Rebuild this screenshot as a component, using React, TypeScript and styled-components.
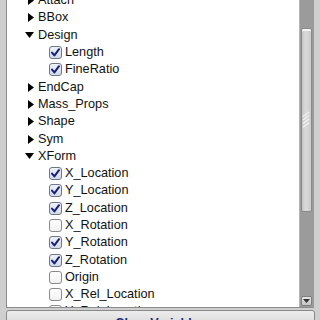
import * as React from 'react'
import styled, { createGlobalStyle } from 'styled-components'

const Global = createGlobalStyle`
  html, body { margin: 0; padding: 0; background: #d2d2d2; }
  body { font-family: "Liberation Sans", Arial, sans-serif; }
`

const Frame = styled.div`
  width: 320px;
  height: 320px;
  overflow: hidden;
  background: #cfcfcf;
  display: flex;
  flex-direction: column;
`

const ListBox = styled.div`
  height: 308px;
  margin-left: 6px;
  margin-right: 6px;
  flex: none;
  display: flex;
  background: #fff;
  border-left: 1px solid #8c8c8c;
  border-right: 1px solid #9a9a9a;
  border-bottom: 1px solid #8c8c8c;
  box-sizing: border-box;
`

const Content = styled.div`
  flex: 1;
  overflow: hidden;
`

const Rows = styled.div`
  margin-top: -8px;
`

const Row = styled.div<{ $level: number }>`
  height: 17.3px;
  display: flex;
  align-items: center;
  padding-left: ${p => (p.$level === 0 ? 18 : 42)}px;
  font-size: 12.7px;
  color: #111;
  white-space: nowrap;
`

const Arrow = styled.span<{ $open: boolean }>`
  width: 12px;
  height: 10px;
  display: flex;
  align-items: center;
  justify-content: ${p => (p.$open ? 'flex-start' : 'center')};
  margin-right: 1px;
`

const Label = styled.span`
  line-height: 17px;
`

const Box = styled.span<{ $checked: boolean }>`
  width: 11px;
  height: 11px;
  border: 1px solid ${p => (p.$checked ? '#6f7785' : '#8a8a8a')};
  border-radius: 3px;
  background: ${p => (p.$checked ? 'linear-gradient(#eef2f8, #d3dbe7)' : 'linear-gradient(#ffffff, #f1f1f1)')};
  margin-right: 3px;
  display: flex;
  align-items: center;
  justify-content: center;
  flex: none;
`

const ScrollBar = styled.div`
  width: 14px;
  flex: none;
  display: flex;
  flex-direction: column;
  background: #9b9b9b;
  border-left: 1px solid #b4b4b4;
  box-sizing: border-box;
`

const Track = styled.div<{ $h: number }>`
  height: ${p => p.$h}px;
  flex: none;
`

const Thumb = styled.div`
  height: 182px;
  flex: none;
  margin: 0 1px;
  border: 1px solid #8a8a8a;
  border-radius: 2px;
  background: linear-gradient(90deg, #c4c4c4, #dadada 40%, #cbcbcb);
  box-shadow: inset 0 2px 0 #f4f4f4;
  display: flex;
  align-items: center;
  justify-content: center;
`

const StepButton = styled.div`
  height: 12px;
  margin: 0 1px 1px;
  border: 1px solid #7f7f7f;
  border-radius: 2px;
  background: linear-gradient(#e4e4e4, #c6c6c6);
  display: flex;
  align-items: center;
  justify-content: center;
`

const Footer = styled.div`
  flex: 1;
  padding: 2px 5px 0 6px;
`

const ClearButton = styled.button`
  width: 100%;
  height: 24px;
  border: 1px solid #8a8a8a;
  border-radius: 3px;
  background: linear-gradient(#ececec, #d0d0d0);
  font-family: "Liberation Sans", Arial, sans-serif;
  font-weight: bold;
  font-size: 12.6px;
  color: #1b2a78;
  padding: 5px 0 0;
  display: flex;
  justify-content: center;
  align-items: flex-start;
`

type Item = { label: string; level: number; open?: boolean; checked?: boolean }

const items: Item[] = [
  { label: 'Attach', level: 0, open: false },
  { label: 'BBox', level: 0, open: false },
  { label: 'Design', level: 0, open: true },
  { label: 'Length', level: 1, checked: true },
  { label: 'FineRatio', level: 1, checked: true },
  { label: 'EndCap', level: 0, open: false },
  { label: 'Mass_Props', level: 0, open: false },
  { label: 'Shape', level: 0, open: false },
  { label: 'Sym', level: 0, open: false },
  { label: 'XForm', level: 0, open: true },
  { label: 'X_Location', level: 1, checked: true },
  { label: 'Y_Location', level: 1, checked: true },
  { label: 'Z_Location', level: 1, checked: true },
  { label: 'X_Rotation', level: 1, checked: false },
  { label: 'Y_Rotation', level: 1, checked: true },
  { label: 'Z_Rotation', level: 1, checked: true },
  { label: 'Origin', level: 1, checked: false },
  { label: 'X_Rel_Location', level: 1, checked: false },
  { label: 'Y_Rel_Location', level: 1, checked: false },
]

const Triangle = ({ open }: { open: boolean }) =>
  open ? (
    <svg width="9" height="6" viewBox="0 0 9 6"><path d="M0 0H9L4.5 6Z" fill="#000" /></svg>
  ) : (
    <svg width="6" height="9" viewBox="0 0 6 9"><path d="M0 0L6 4.5L0 9Z" fill="#000" /></svg>
  )

const Check = () => (
  <svg width="9" height="9" viewBox="0 0 9 9">
    <path d="M1 4.6L3.4 7.4L8 1.2" fill="none" stroke="#16207a" strokeWidth="2" strokeLinecap="round" strokeLinejoin="round" />
  </svg>
)

export default function App() {
  return (
    <Frame>
      <Global />
      <ListBox>
        <Content>
          <Rows>
            {items.map(it => (
              <Row key={it.label} $level={it.level}>
                {it.level === 0 ? (
                  <Arrow $open={!!it.open}><Triangle open={!!it.open} /></Arrow>
                ) : (
                  <Box $checked={!!it.checked}>{it.checked && <Check />}</Box>
                )}
                <Label>{it.label}</Label>
              </Row>
            ))}
          </Rows>
        </Content>
        <ScrollBar>
          <Track $h={28} />
          <Thumb>
            <svg width="10" height="18" viewBox="0 0 10 18">
              {[0, 4, 8, 12].map(y => (
                <path key={y} d={`M1 ${y + 5}L8 ${y}`} stroke="#f4f4f4" strokeWidth="1.4" />
              ))}
            </svg>
          </Thumb>
          <Track $h={84} />
          <StepButton>
            <svg width="7" height="5" viewBox="0 0 7 5"><path d="M0 0H7L3.5 4Z" fill="#333" /></svg>
          </StepButton>
        </ScrollBar>
      </ListBox>
      <Footer>
        <ClearButton>Clear Variables</ClearButton>
      </Footer>
    </Frame>
  )
}
